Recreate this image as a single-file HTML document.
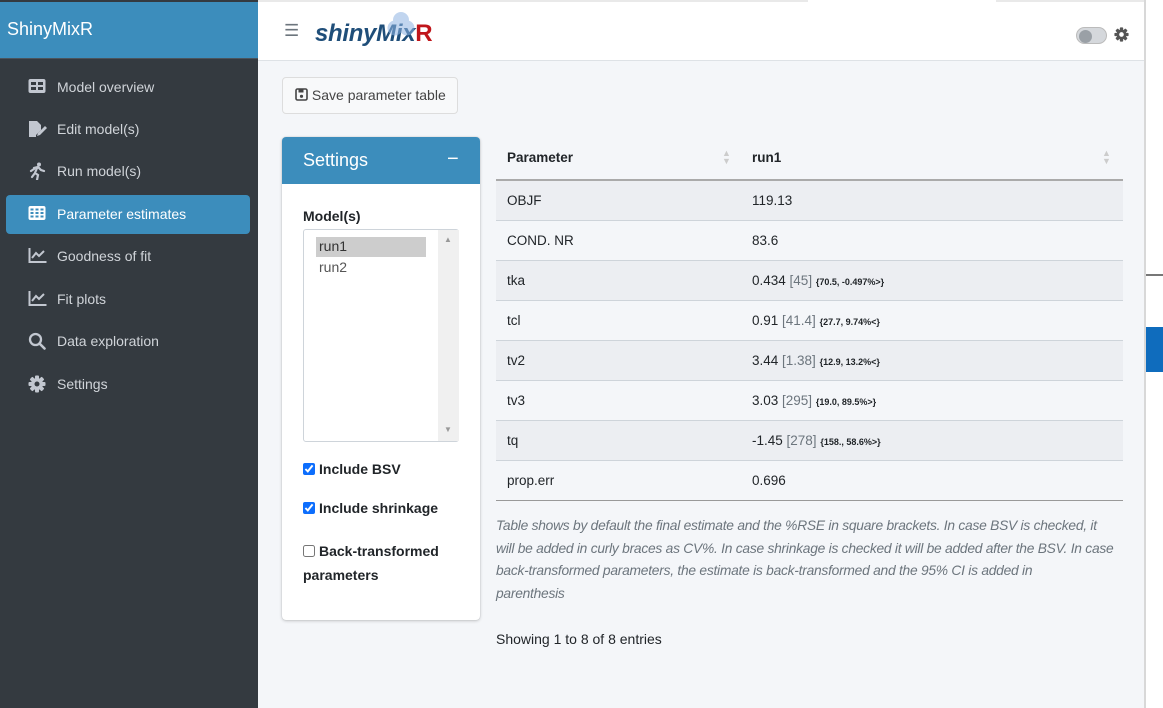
<!DOCTYPE html>
<html><head><meta charset="utf-8"><style>
*{box-sizing:border-box;margin:0;padding:0}
body{width:1163px;height:708px;overflow:hidden;background:#f4f6f9;font-family:"Liberation Sans",sans-serif;position:relative;color:#212529}
.a{position:absolute}
#sb{left:0;top:0;width:258px;height:708px;background:#343a40}
#brand{left:0;top:2px;width:258px;height:57px;background:#3c8dbc;color:#fff;font-size:18px;padding:17px 0 0 7px;border-bottom:1px solid #4b545c}
.nav{left:28px;color:#d0d4d9;font-size:14px;white-space:nowrap}
.nav svg{position:absolute;left:0;top:0}
.nav span{position:absolute;left:29px;top:1px}
#act{left:6px;top:195px;width:244px;height:39px;background:#3c8dbc;border-radius:4px}
#top{left:258px;top:2px;width:888px;height:59px;background:#fff;border-bottom:1px solid #dee2e6}
#vline{left:1144px;top:0;width:2px;height:708px;background:#d8d8d8}
#card{left:282px;top:137px;width:198px;height:483px;background:#fff;border-radius:4px;box-shadow:0 0 1px rgba(0,0,0,.2),0 1px 3px rgba(0,0,0,.2)}
#ch{left:0;top:0;width:198px;height:47px;background:#3c8dbc;border-radius:4px 4px 0 0;color:#fff;font-size:18px;padding:13px 0 0 21px}
.row{left:496px;width:627px;height:40px;border-bottom:1px solid #ced4da;font-size:13.5px;color:#212529;white-space:nowrap}
.row>span{position:absolute;top:12px}
.c1{left:11px}.c2{left:256px}
.sm{font-size:9px;font-weight:bold}
.br{color:#6c757d}
</style></head><body>
<div class="a" style="left:258px;top:0;width:905px;height:3px;background:#e9e9e9"></div>
<div class="a" style="left:808px;top:0;width:188px;height:3px;background:#fff"></div>
<div class="a" id="sb"></div>
<div class="a" id="brand">ShinyMixR</div>
<div class="a" id="act"></div>
<div class="a nav" style="top:78px"><svg width="18" height="16" viewBox="0 0 18 16"><rect x="0.5" y="1" width="17" height="14" rx="2" fill="#c2c7d0"/><rect x="3" y="4" width="5" height="3" fill="#343a40"/><rect x="10" y="4" width="5" height="3" fill="#343a40"/><rect x="3" y="9" width="5" height="3" fill="#343a40"/><rect x="10" y="9" width="5" height="3" fill="#343a40"/></svg><span>Model overview</span></div>
<div class="a nav" style="top:120px"><svg width="20" height="18" viewBox="0 0 20 18"><path d="M1 1h8l4 4v5l-5 5v2H1z" fill="#c2c7d0"/><path d="M9 16l1-3 7-7 2 2-7 7z" fill="#c2c7d0"/></svg><span>Edit model(s)</span></div>
<div class="a nav" style="top:162px"><svg width="18" height="18" viewBox="0 0 18 18"><circle cx="11" cy="2.5" r="2" fill="#c2c7d0"/><path d="M6 6l4-1 3 3 3 1M9 6l-2 5 3 2-1 5M7 11l-3 4M6 7l-3 2" stroke="#c2c7d0" stroke-width="2.2" fill="none" stroke-linecap="round"/></svg><span>Run model(s)</span></div>
<div class="a nav" style="top:205px;color:#fff"><svg width="18" height="16" viewBox="0 0 18 16"><rect x="0.5" y="1" width="17" height="14" rx="2" fill="#fff"/><g fill="#3c8dbc"><rect x="2.5" y="3.5" width="3" height="2"/><rect x="7.5" y="3.5" width="3" height="2"/><rect x="12.5" y="3.5" width="3" height="2"/><rect x="2.5" y="7" width="3" height="2"/><rect x="7.5" y="7" width="3" height="2"/><rect x="12.5" y="7" width="3" height="2"/><rect x="2.5" y="10.5" width="3" height="2"/><rect x="7.5" y="10.5" width="3" height="2"/><rect x="12.5" y="10.5" width="3" height="2"/></g></svg><span>Parameter estimates</span></div>
<div class="a nav" style="top:247px"><svg width="19" height="17" viewBox="0 0 19 17"><path d="M1.5 1v14h17M4 11l4-5 3 3 5-5" stroke="#c2c7d0" stroke-width="2" fill="none"/></svg><span>Goodness of fit</span></div>
<div class="a nav" style="top:290px"><svg width="19" height="17" viewBox="0 0 19 17"><path d="M1.5 1v14h17M4 11l4-5 3 3 5-5" stroke="#c2c7d0" stroke-width="2" fill="none"/></svg><span>Fit plots</span></div>
<div class="a nav" style="top:332px"><svg width="19" height="18" viewBox="0 0 19 18"><circle cx="7.5" cy="7.5" r="5.5" stroke="#c2c7d0" stroke-width="2.3" fill="none"/><path d="M11.5 11.5l5 5" stroke="#c2c7d0" stroke-width="2.6" stroke-linecap="round"/></svg><span>Data exploration</span></div>
<div class="a nav" style="top:375px"><svg width="18" height="18" viewBox="0 0 18 18"><g fill="#c2c7d0"><circle cx="9" cy="9" r="6"/><rect x="7" y="0.5" width="4" height="17" rx="1"/><rect x="0.5" y="7" width="17" height="4" rx="1"/><rect x="7" y="0.5" width="4" height="17" rx="1" transform="rotate(45 9 9)"/><rect x="7" y="0.5" width="4" height="17" rx="1" transform="rotate(-45 9 9)"/></g><circle cx="9" cy="9" r="2.5" fill="#343a40"/></svg><span>Settings</span></div>

<div class="a" id="top"></div>
<div class="a" style="left:284px;top:21px;font-size:17px;color:#6c757d">&#9776;</div>
<div class="a" style="left:315px;top:20px;font-size:24px;font-weight:bold;font-style:italic;color:#1f4e79;letter-spacing:-0.3px">shinyMix<span style="color:#c0161b;font-style:normal">R</span></div>
<svg class="a" style="left:382px;top:11px" width="40" height="36"><g fill="#8fb4e3" opacity=".55"><circle cx="19" cy="9" r="8"/><circle cx="13" cy="17" r="7.5"/><circle cx="25" cy="17" r="7.5"/></g></svg>
<div class="a" style="left:1076px;top:27px;width:31px;height:17px;border-radius:9px;background:#d5d8dc;border:1px solid #bbb"><div style="position:absolute;left:2px;top:1.5px;width:13px;height:13px;border-radius:50%;background:#9aa0a6"></div></div>
<svg class="a" style="left:1114px;top:27px" width="15" height="15" viewBox="0 0 18 18"><g fill="#555"><circle cx="9" cy="9" r="6"/><rect x="7" y="0.5" width="4" height="17" rx="1"/><rect x="0.5" y="7" width="17" height="4" rx="1"/><rect x="7" y="0.5" width="4" height="17" rx="1" transform="rotate(45 9 9)"/><rect x="7" y="0.5" width="4" height="17" rx="1" transform="rotate(-45 9 9)"/></g><circle cx="9" cy="9" r="2.8" fill="#fff"/></svg>
<div class="a" id="vline"></div>
<div class="a" style="left:1146px;top:0;width:17px;height:708px;background:#fff"></div>
<div class="a" style="left:1146px;top:274px;width:17px;height:2px;background:#777"></div>
<div class="a" style="left:1146px;top:327px;width:17px;height:45px;background:#0f6cbd"></div>

<div class="a" style="left:282px;top:77px;width:176px;height:37px;border:1px solid #ddd;border-radius:4px;background:#f8f9fa;font-size:14px;color:#444;padding:9px 0 0 12px;white-space:nowrap"><svg width="13" height="13" viewBox="0 0 13 13" style="vertical-align:-1px"><rect x="1" y="1" width="11" height="11" rx="1.5" stroke="#444" stroke-width="1.6" fill="none"/><rect x="3.5" y="1.5" width="5" height="3" fill="#444"/><circle cx="6.5" cy="8.3" r="1.6" fill="#444"/></svg> Save parameter table</div>

<div class="a" id="card">
<div class="a" id="ch">Settings<span style="position:absolute;left:165px;top:11px;font-size:20px">&minus;</span></div>
<div class="a" style="left:21px;top:71px;font-size:14px;font-weight:bold">Model(s)</div>
<div class="a" style="left:21px;top:92px;width:156px;height:213px;border:1px solid #ced4da;border-radius:3px;background:#fff">
<div class="a" style="left:12px;top:7px;width:110px;height:20px;background:#cdcdcd"></div>
<div class="a" style="left:15px;top:8px;font-size:14px;color:#333">run1</div>
<div class="a" style="left:15px;top:29px;font-size:14px;color:#555">run2</div>
<div class="a" style="left:134px;top:0;width:21px;height:211px;background:#f0f0f0"></div>
<div class="a" style="left:140px;top:5px;font-size:8px;color:#999">&#9650;</div>
<div class="a" style="left:140px;top:195px;font-size:8px;color:#999">&#9660;</div>
</div>
<div class="a" style="left:21px;top:324px;font-size:14px;font-weight:bold;white-space:nowrap"><input type="checkbox" checked style="width:12px;height:12px;margin-right:4px;accent-color:#0d6efd;vertical-align:-1px">Include BSV</div>
<div class="a" style="left:21px;top:363px;font-size:14px;font-weight:bold;white-space:nowrap"><input type="checkbox" checked style="width:12px;height:12px;margin-right:4px;accent-color:#0d6efd;vertical-align:-1px">Include shrinkage</div>
<div class="a" style="left:21px;top:402px;font-size:14px;font-weight:bold;line-height:24px;white-space:nowrap"><input type="checkbox" style="width:12px;height:12px;margin-right:4px;vertical-align:-1px">Back-transformed<br>parameters</div>
</div>

<div class="a row" style="top:137px;height:44px;border-bottom:2px solid #aaa;font-weight:bold"><span class="c1" style="top:13px">Parameter</span><span class="c2" style="top:13px">run1</span><span style="left:226px;top:12px;font-size:9px;color:#ccc;line-height:8px">&#9650;<br>&#9660;</span><span style="left:606px;top:12px;font-size:9px;color:#ccc;line-height:8px">&#9650;<br>&#9660;</span></div>
<div class="a row" style="top:181px;background:#eceef2"><span class="c1">OBJF</span><span class="c2">119.13</span></div>
<div class="a row" style="top:221px"><span class="c1">COND. NR</span><span class="c2">83.6</span></div>
<div class="a row" style="top:261px;background:#eceef2"><span class="c1">tka</span><span class="c2">0.434 <span class="br">[45]</span> <span class="sm">{70.5, -0.497%&gt;}</span></span></div>
<div class="a row" style="top:301px"><span class="c1">tcl</span><span class="c2">0.91 <span class="br">[41.4]</span> <span class="sm">{27.7, 9.74%&lt;}</span></span></div>
<div class="a row" style="top:341px;background:#eceef2"><span class="c1">tv2</span><span class="c2">3.44 <span class="br">[1.38]</span> <span class="sm">{12.9, 13.2%&lt;}</span></span></div>
<div class="a row" style="top:381px"><span class="c1">tv3</span><span class="c2">3.03 <span class="br">[295]</span> <span class="sm">{19.0, 89.5%&gt;}</span></span></div>
<div class="a row" style="top:421px;background:#eceef2"><span class="c1">tq</span><span class="c2">-1.45 <span class="br">[278]</span> <span class="sm">{158., 58.6%&gt;}</span></span></div>
<div class="a row" style="top:461px;border-bottom:1px solid #999"><span class="c1">prop.err</span><span class="c2">0.696</span></div>

<div class="a" style="left:496px;top:515px;font-size:13.8px;font-style:italic;color:#6c757d;line-height:22.7px;white-space:nowrap;letter-spacing:-0.25px">Table shows by default the final estimate and the %RSE in square brackets. In case BSV is checked, it<br>will be added in curly braces as CV%. In case shrinkage is checked it will be added after the BSV. In case<br>back-transformed parameters, the estimate is back-transformed and the 95% CI is added in<br>parenthesis</div>
<div class="a" style="left:496px;top:631px;font-size:14px;color:#212529">Showing 1 to 8 of 8 entries</div>
</body></html>
